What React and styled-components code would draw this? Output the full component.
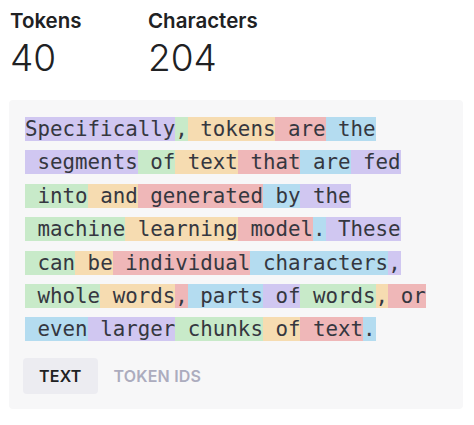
import React from "react";
import styled, { createGlobalStyle } from "styled-components";

const GlobalStyle = createGlobalStyle`
  body {
    margin: 0;
    background: #ffffff;
    font-family: Inter, "Noto Sans", sans-serif;
    color: #202123;
  }
`;

const TOKENS = [
  "Specifically", ",", " tokens", " are", " the",
  " segments", " of", " text", " that", " are", " fed",
  " into", " and", " generated", " by", " the",
  " machine", " learning", " model", ".", " These",
  " can", " be", " individual", " characters", ",",
  " whole", " words", ",", " parts", " of", " words", ",", " or",
  " even", " larger", " chunks", " of", " text", ".",
];

// 줄바꿈 위치 (토큰 인덱스 뒤에서 끊김)
const BREAKS = [4, 10, 15, 20, 25, 33];

const COLORS = ["#d0c7f1", "#c8eac9", "#f6dcb1", "#efb7b8", "#b4dcf0"];

const Page = styled.div`
  padding: 8px 11px 0 9px;
`;

const Stats = styled.div`
  display: flex;
  padding-left: 1px;
`;

const Stat = styled.div`
  width: ${(p) => p.$width}px;
  display: flex;
  flex-direction: column;
`;

const StatLabel = styled.div`
  font-size: 20.5px;
  font-weight: 600;
  line-height: 26px;
`;

const StatValue = styled.div`
  font-size: 37px;
  font-weight: 300;
  line-height: 44px;
  margin-top: 2px;
`;

const Panel = styled.div`
  margin-top: 20px;
  background: #f7f7f8;
  border-radius: 4px;
  padding: 13px 16px 15px 16px;
  display: flex;
  flex-direction: column;
`;

const TokenText = styled.div`
  font-family: "DejaVu Sans Mono", "Liberation Mono", monospace;
  font-size: 20.8px;
  line-height: 33.4px;
  color: #353740;
  white-space: pre;
`;

const Token = styled.span`
  background: ${(p) => p.$color};
`;

const Tabs = styled.div`
  display: flex;
  margin-top: 11px;
  margin-left: -2px;
`;

const Tab = styled.button`
  border: none;
  background: ${(p) => (p.$active ? "#ececf1" : "transparent")};
  color: ${(p) => (p.$active ? "#202123" : "#acacbe")};
  font-family: Inter, "Noto Sans", sans-serif;
  font-size: 16px;
  font-weight: 600;
  letter-spacing: 0.2px;
  height: 36px;
  padding: 0 16px;
  border-radius: 4px;
  cursor: pointer;
`;

function App() {
  const text = TOKENS.join("");
  return (
    <>
      <GlobalStyle />
      <Page>
        <Stats>
          <Stat $width={138}>
            <StatLabel>Tokens</StatLabel>
            <StatValue>{TOKENS.length}</StatValue>
          </Stat>
          <Stat $width={160}>
            <StatLabel>Characters</StatLabel>
            <StatValue>{text.length}</StatValue>
          </Stat>
        </Stats>
        <Panel>
          <TokenText>
            {TOKENS.map((t, i) => (
              <React.Fragment key={i}>
                <Token $color={COLORS[i % COLORS.length]}>{t}</Token>
                {BREAKS.includes(i) && <br />}
              </React.Fragment>
            ))}
          </TokenText>
          <Tabs>
            <Tab $active>TEXT</Tab>
            <Tab>TOKEN IDS</Tab>
          </Tabs>
        </Panel>
      </Page>
    </>
  );
}

export default App;
